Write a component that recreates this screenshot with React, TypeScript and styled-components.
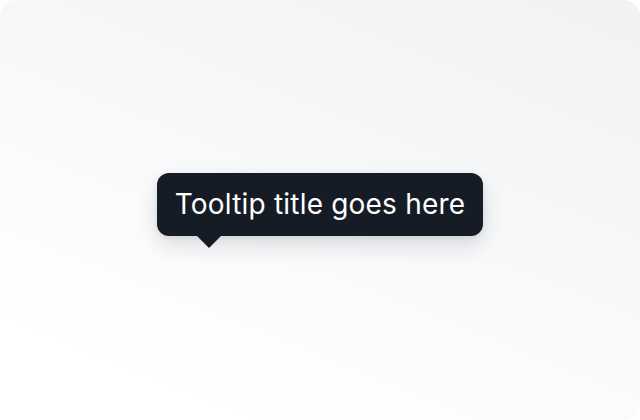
import styled, { createGlobalStyle } from "styled-components";

const GlobalStyle = createGlobalStyle`
  html, body {
    margin: 0;
    padding: 0;
    background: #ffffff;
  }
  * { box-sizing: border-box; }
`

const Stage = styled.div`
  width: 640px;
  height: 420px;
  display: flex;
  align-items: center;
  justify-content: center;
  border-radius: 16px;
  background: linear-gradient(202deg, #f1f2f4 0%, #f6f7f9 35%, #fcfcfd 65%, #ffffff 85%);
  overflow: hidden;
`

const Tooltip = styled.div`
  position: relative;
  display: flex;
  align-items: center;
  height: 63px;
  padding: 0 18px;
  margin-bottom: 12px;
  border-radius: 12px;
  background-color: #151c26;
  color: #ffffff;
  font: 400 28px/1 Inter, "Noto Sans", sans-serif;
  letter-spacing: 0.2px;
  box-shadow: 0 10px 22px rgba(17, 24, 39, 0.13), 0 2px 6px rgba(17, 24, 39, 0.08);
`

const Arrow = styled.span<{ $left: number }>`
  position: absolute;
  top: 100%;
  left: ${p => p.$left}px;
  width: 0;
  height: 0;
  border-left: 12px solid transparent;
  border-right: 12px solid transparent;
  border-top: 12px solid #151c26;
`

const App = () => {
  return <>
    <GlobalStyle />
    <Stage>
      <Tooltip>
        Tooltip title goes here
        <Arrow $left={40} />
      </Tooltip>
    </Stage>
  </>
}

export default App
